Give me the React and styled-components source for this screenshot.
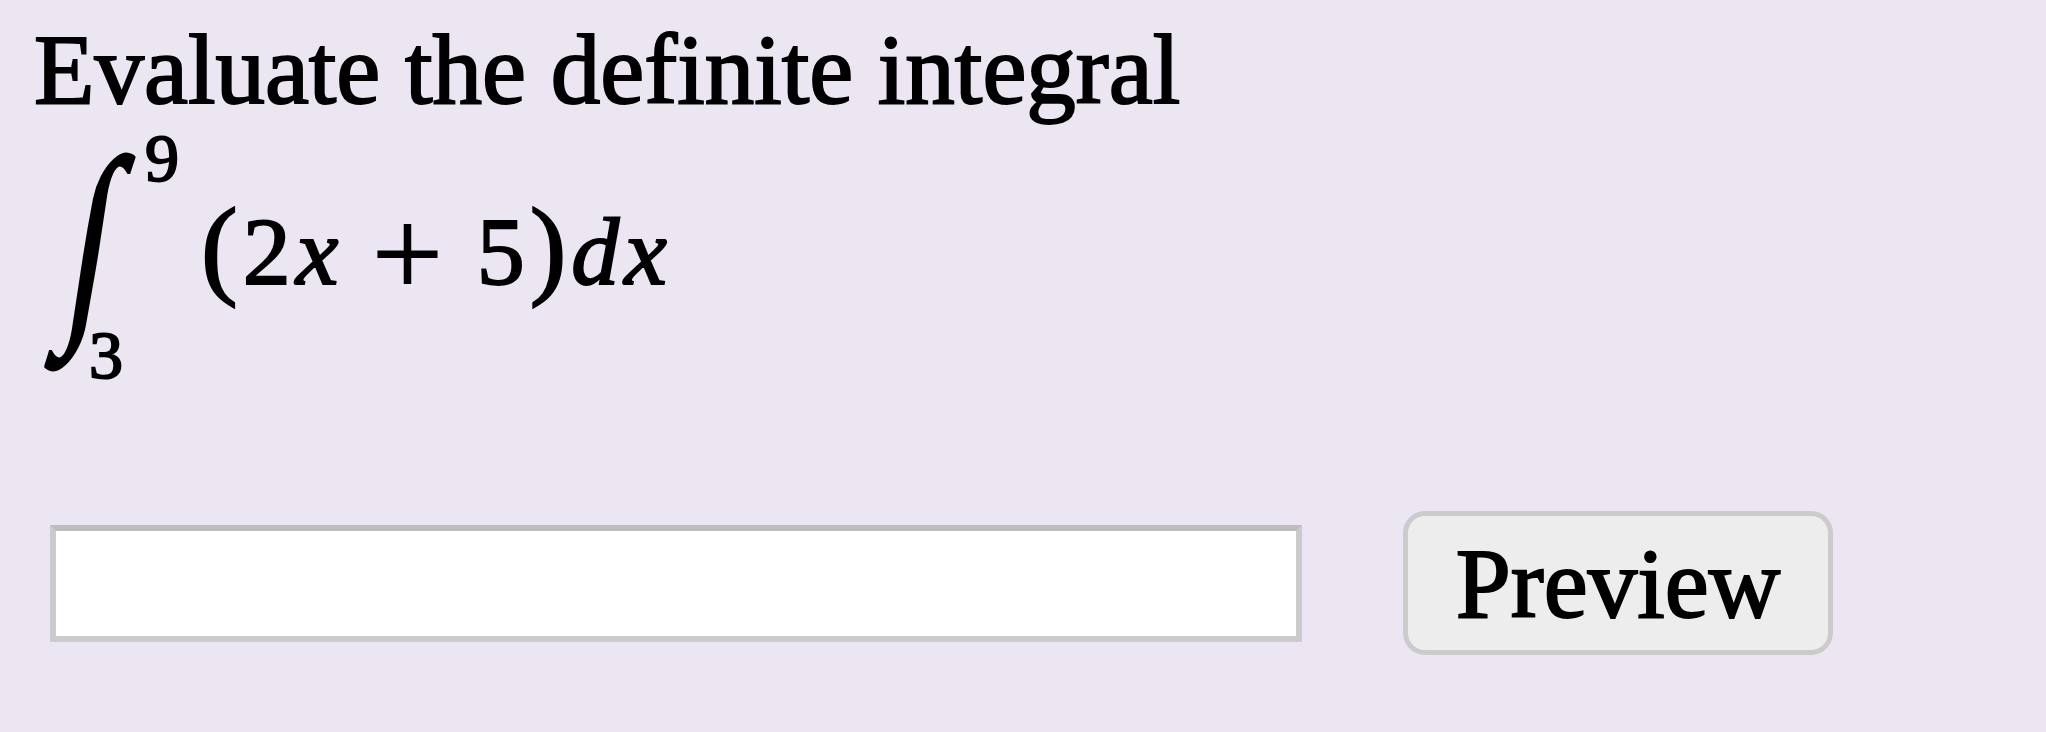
import styled, { createGlobalStyle } from "styled-components"

const GlobalStyle = createGlobalStyle`
  html, body {
    margin: 0;
    background: #ebe6f2;
  }
  body {
    color: #000;
    font-family: "Liberation Serif", "Times New Roman", serif;
  }
`

export default function App() {
  return (
    <>
      <GlobalStyle />
      <Problem>
        <Prompt>Evaluate the definite integral</Prompt>
        <MathLine>
          <Integral>∫</Integral>
          <Limits>
            <Limit upper>9</Limit>
            <Limit>3</Limit>
          </Limits>
          <Expr>
            <Paren>(</Paren>2<Var>x</Var><Op>+</Op>5<Paren>)</Paren><Var>d</Var><Var>x</Var>
          </Expr>
        </MathLine>
        <AnswerRow>
          <AnswerInput type="text" aria-label="answer" />
          <PreviewButton type="button">Preview</PreviewButton>
        </AnswerRow>
      </Problem>
    </>
  )
}

const Problem = styled.div`
  padding: 20px 0 0 34px;
  -webkit-text-stroke: 2px #000;
`

const Prompt = styled.div`
  font-size: 99px;
  line-height: 1;
`

const MathLine = styled.div`
  display: flex;
  align-items: center;
  height: 265px;
  margin-top: 5px;
`

const Integral = styled.span`
  display: inline-block;
  width: 96px;
  margin: 0 0 40px 24px;
  font-family: "Liberation Serif", serif;
  font-size: 220px;
  line-height: 1;
  -webkit-text-stroke: 3px #000;
  transform: scaleX(0.68) skewX(-13deg);
`

const Limits = styled.div`
  display: flex;
  flex-direction: column;
  justify-content: space-between;
  align-self: stretch;
  margin-left: -65px;
`

const Limit = styled.span`
  font-size: 68px;
  line-height: 1;
  align-self: flex-start;
  margin-left: ${({ upper }) => upper ? '56px' : '0'};
`

const Expr = styled.div`
  font-size: 96px;
  line-height: 1;
  margin: 0 0 20px 22px;
  white-space: nowrap;
  letter-spacing: 5px;
`

const Paren = styled.span`
  font-size: 110px;
`

const Var = styled.i`
  font-style: italic;
`

const Op = styled.span`
  font-family: "DejaVu Serif", serif;
  -webkit-text-stroke: 0;
  margin: 0 24px;
`

const AnswerRow = styled.div`
  display: flex;
  align-items: center;
  gap: 101px;
  margin: 122px 0 0 16px;
`

const AnswerInput = styled.input`
  box-sizing: border-box;
  width: 1252px;
  height: 117px;
  background: #fff;
  border: 6px solid #cbcbcb;
  border-top-color: #bdbdbd;
  outline: none;
`

const PreviewButton = styled.button`
  box-sizing: border-box;
  width: 430px;
  height: 144px;
  padding: 0;
  background: #ededed;
  border: 5px solid #cbcbcb;
  border-radius: 22px;
  color: #000;
  font-family: "Liberation Serif", "Times New Roman", serif;
  font-size: 99px;
  line-height: 1;
`
